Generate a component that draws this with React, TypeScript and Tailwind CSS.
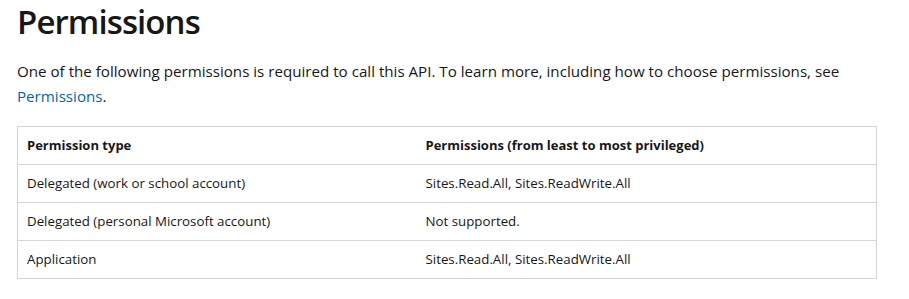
import type { FC } from "react";

interface PermissionRow {
  type: string;
  permissions: string;
}

const rows: PermissionRow[] = [
  { type: "Delegated (work or school account)", permissions: "Sites.Read.All, Sites.ReadWrite.All" },
  { type: "Delegated (personal Microsoft account)", permissions: "Not supported." },
  { type: "Application", permissions: "Sites.Read.All, Sites.ReadWrite.All" },
];

const App: FC = () => {
  return (
    <div className="min-h-screen bg-white px-[17px] pt-[2px] text-[#171717] font-['Segoe_UI','Open_Sans',sans-serif]">
      <h1 className="text-[33px] leading-[40px] font-semibold tracking-[-0.9px]">Permissions</h1>
      <p className="mt-[17px] text-[15.15px] leading-[25px]">
        One of the following permissions is required to call this API. To learn more, including how to choose permissions, see{" "}
        <a href="#" className="text-[#0065b3]">Permissions</a>.
      </p>
      <table className="mt-[17px] w-[860px] border border-[#d6d6d6] border-collapse text-[13.3px]">
        <thead>
          <tr className="h-[38px] border-b border-[#d6d6d6] text-[13px]">
            <th className="w-[399px] pl-[9px] text-left font-bold">Permission type</th>
            <th className="pl-[9px] text-left font-bold">Permissions (from least to most privileged)</th>
          </tr>
        </thead>
        <tbody>
          {rows.map((row) => (
            <tr key={row.type} className="h-[38px] border-b border-[#d6d6d6]">
              <td className="pl-[9px]">{row.type}</td>
              <td className="pl-[9px]">{row.permissions}</td>
            </tr>
          ))}
        </tbody>
      </table>
    </div>
  );
};

export default App;
